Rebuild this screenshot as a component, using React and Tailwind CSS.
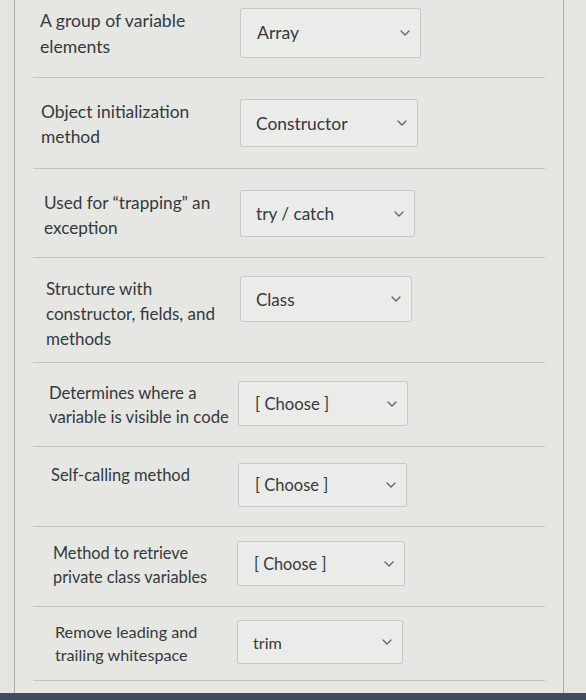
import React from "react";

const rows = [
  { label: ["A group of variable", "elements"], value: "Array", row: "h-[78px] pt-[8px]", fs: "text-[17.6px] leading-[26px]", lab: "pl-[7px] w-[207px]", sel: "w-[181px] h-[50px] pl-[16px]" },
  { label: ["Object initialization", "method"], value: "Constructor", row: "h-[91px] pt-[21px]", fs: "text-[17.4px] leading-[25px]", lab: "pl-[8px] w-[207px]", sel: "w-[178px] h-[48px] pl-[15px]" },
  { label: ["Used for \u201ctrapping\u201d an", "exception"], value: "try / catch", row: "h-[89px] pt-[21px]", fs: "text-[17.2px] leading-[25px]", lab: "pl-[11px] w-[207px]", sel: "w-[175px] h-[47px] pl-[15px]" },
  { label: ["Structure with", "constructor, fields, and", "methods"], value: "Class", row: "h-[105px] pt-[18px]", fs: "text-[17px] leading-[25px]", lab: "pl-[13px] w-[207px]", sel: "w-[172px] h-[46px] pl-[15px]" },
  { label: ["Determines where a", "variable is visible in code"], value: "[ Choose ]", row: "h-[84px] pt-[18px]", fs: "text-[16.7px] leading-[24px]", lab: "pl-[16px] w-[205px]", sel: "w-[170px] h-[45px] pl-[16px]" },
  { label: ["Self-calling method"], value: "[ Choose ]", row: "h-[80px] pt-[16px]", fs: "text-[16.5px] leading-[24px]", lab: "pl-[18px] w-[205px]", sel: "w-[169px] h-[44px] pl-[16px]" },
  { label: ["Method to retrieve", "private class variables"], value: "[ Choose ]", row: "h-[80px] pt-[14px]", fs: "text-[16.3px] leading-[24px]", lab: "pl-[20px] w-[204px]", sel: "w-[168px] h-[45px] pl-[16px]" },
  { label: ["Remove leading and", "trailing whitespace"], value: "trim", row: "h-[74px] pt-[13px]", fs: "text-[16.2px] leading-[23px]", lab: "pl-[22px] w-[204px]", sel: "w-[166px] h-[44px] pl-[15px]" },
];

function Chevron() {
  return (
    <svg width="10" height="6" viewBox="0 0 10 6" fill="none" className="shrink-0">
      <path d="M1 1 L5 5 L9 1" stroke="#5b6570" strokeWidth="1.3" strokeLinecap="round" strokeLinejoin="round" />
    </svg>
  );
}

export default function App() {
  return (
    <div className="w-[586px] h-[700px] bg-[#e4e4e1] flex flex-col overflow-hidden" style={{ fontFamily: "Lato, 'Open Sans', sans-serif" }}>
      <div className="flex-1 ml-[14px] w-[550px] border-l border-r border-[#a9aaab] bg-[#e6e6e3] flex flex-col">
        {rows.map((r, i) => (
          <div key={i} className={`${r.row} ${r.fs} mx-[18px] border-b border-[#c3c4c2] flex items-start text-[#333a40]`}>
            <div className={`${r.lab} shrink-0`}>
              {r.label.map((l, j) => (
                <div key={j}>{l}</div>
              ))}
            </div>
            <div className={`${r.sel} shrink-0 border border-[#c7c8c7] bg-[#ebebe9] rounded-[2px] flex items-center justify-between pr-[10px]`}>
              <span>{r.value}</span>
              <Chevron />
            </div>
          </div>
        ))}
      </div>
      <div className="h-[7px] bg-[#3e4e5c]" />
    </div>
  );
}
